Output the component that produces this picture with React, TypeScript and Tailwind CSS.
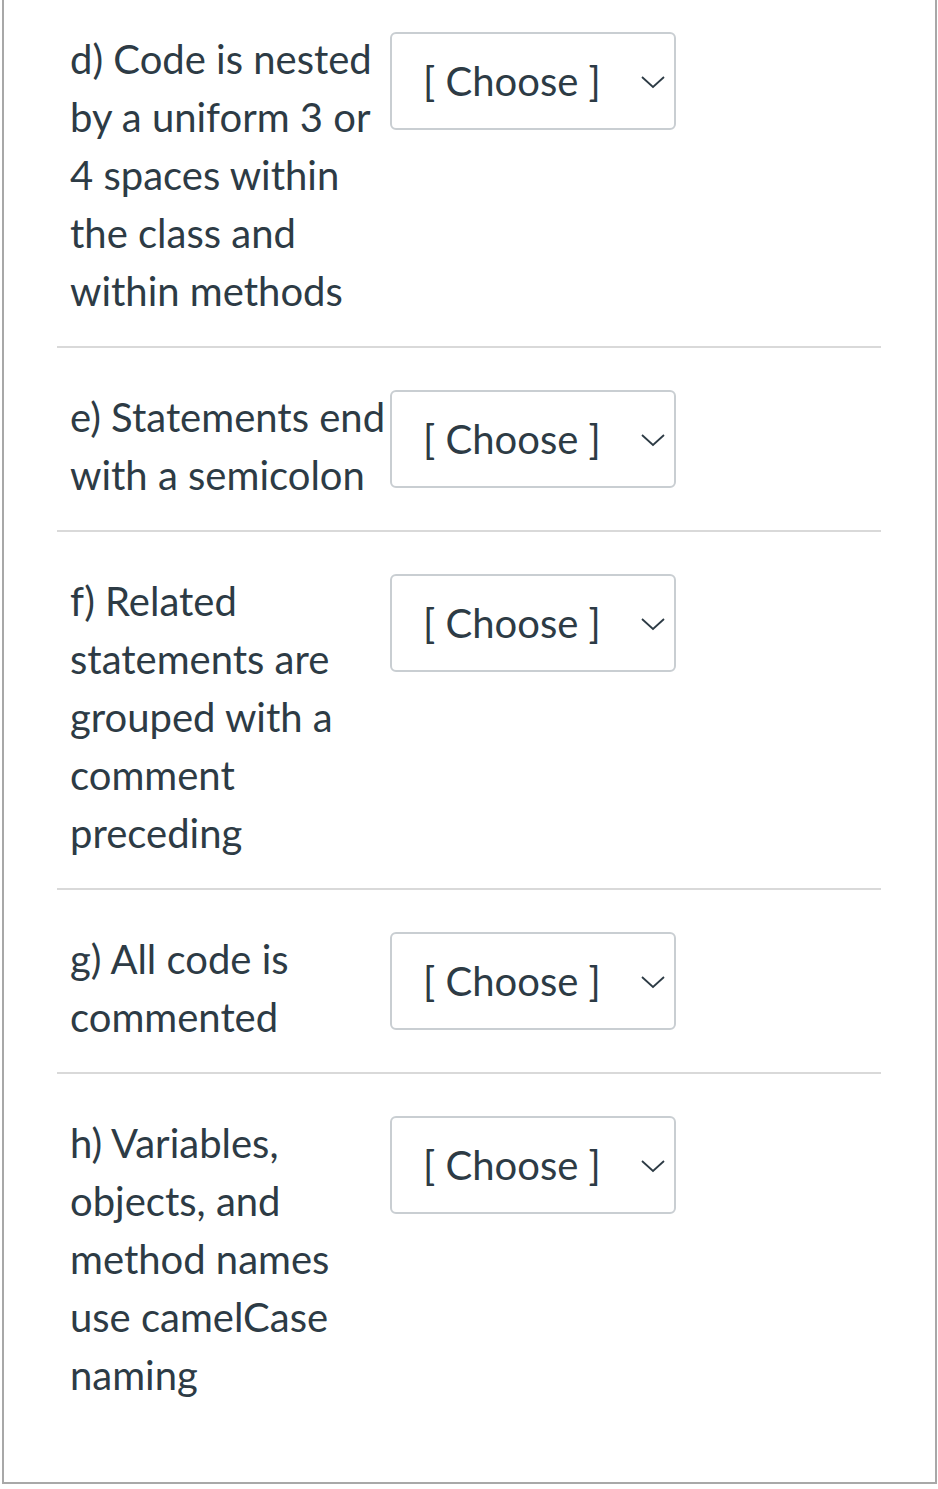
const questions = [
  'd) Code is nested by a uniform 3 or 4 spaces within the class and within methods',
  'e) Statements end with a semicolon',
  'f) Related statements are grouped with a comment preceding',
  'g) All code is commented',
  'h) Variables, objects, and method names use camelCase naming',
];

function ChooseSelect() {
  return (
    <div className="flex h-[98px] w-[286px] shrink-0 items-center justify-between rounded-[6px] border-2 border-[#c9ced2] bg-white pl-[31px] pr-[9px]">
      <span className="text-[40px] leading-none text-[#2d3b45]">[ Choose ]</span>
      <svg width="24" height="14" viewBox="0 0 24 14" fill="none" className="mt-[2px]">
        <path d="M1 2l11 10 11-10" stroke="#2d3b45" strokeWidth="1.8" />
      </svg>
    </div>
  );
}

export default function App() {
  return (
    <div
      className="min-h-screen bg-white"
      style={{ fontFamily: 'Lato, "Open Sans", sans-serif' }}
    >
      <div className="ml-[2px] w-[935px] border-x-2 border-b-2 border-[#a8a8a8] pb-[52px]">
        <div className="ml-[53px] mr-[54px]">
          {questions.map((q, i) => (
            <div
              key={q}
              className={`flex items-start pb-[26px] ${i === 0 ? 'pt-[30px]' : 'border-t-2 border-[#d9d9d9] pt-[40px]'}`}
            >
              <div className="w-[333px] shrink-0 pl-[13px] text-[40px] leading-[58px] text-[#2d3b45]">
                {q}
              </div>
              <div className="pt-[2px]">
                <ChooseSelect />
              </div>
            </div>
          ))}
        </div>
      </div>
    </div>
  );
}
